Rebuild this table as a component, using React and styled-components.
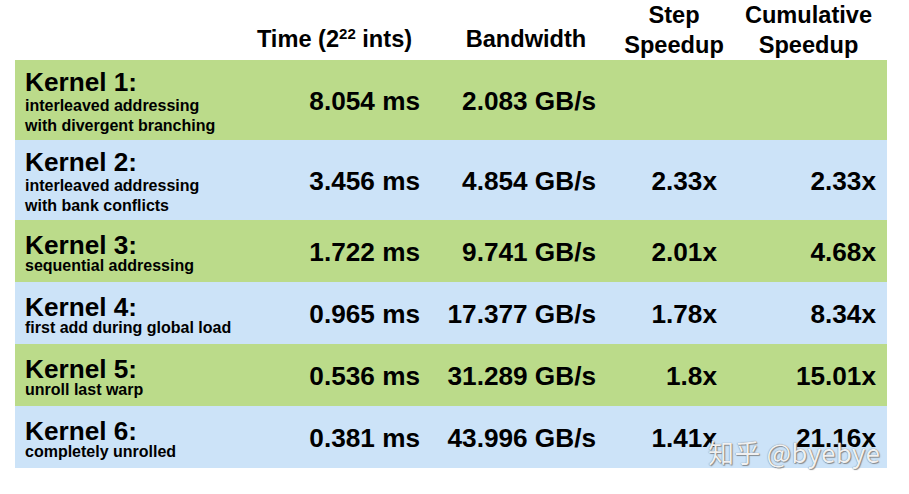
import React from "react";
import styled, { createGlobalStyle } from "styled-components";

const Global = createGlobalStyle`
  html, body { margin: 0; padding: 0; background: #ffffff; }
  body { font-family: "Liberation Sans", Arial, sans-serif; color: #000; }
`;

const Page = styled.div`
  position: relative;
  width: 909px;
  height: 494px;
  padding: 0 22px 0 15px;
  box-sizing: border-box;
  overflow: hidden;
`;

const Table = styled.div`
  display: grid;
  grid-template-columns: 230px 185px 194px 100px 163px;
  width: 872px;
`;

const HeadCell = styled.div`
  height: 60px;
  display: flex;
  flex-direction: column;
  justify-content: flex-end;
  align-items: center;
  text-align: center;
  font-weight: bold;
  font-size: 23.6px;
  line-height: 30px;
  padding-bottom: ${(p) => p.$pb}px;
  box-sizing: border-box;
  transform: translateX(${(p) => p.$dx || 0}px);
  sup {
    font-size: 15px;
    line-height: 0;
    vertical-align: 8px;
  }
`;

const Row = styled.div`
  display: contents;
`;

const Cell = styled.div`
  background: ${(p) => (p.$green ? "#bbdb8a" : "#cce3f8")};
  height: ${(p) => (p.$tall ? 80 : 62)}px;
  box-sizing: border-box;
  display: flex;
  align-items: center;
  justify-content: flex-end;
  padding-right: ${(p) => p.$pr}px;
  font-weight: bold;
  font-size: 26.2px;
  line-height: 26px;
  white-space: nowrap;
  padding-top: 1px;
`;

const LabelCell = styled.div`
  background: ${(p) => (p.$green ? "#bbdb8a" : "#cce3f8")};
  height: ${(p) => (p.$tall ? 80 : 62)}px;
  box-sizing: border-box;
  padding: ${(p) => (p.$tall ? "9px 0 0 10px" : "12px 0 0 10px")};
  display: flex;
  flex-direction: column;
  font-weight: bold;
`;

const KernelName = styled.div`
  font-size: 26.2px;
  line-height: ${(p) => (p.$tall ? 27 : 26)}px;
  white-space: nowrap;
`;

const Sub = styled.div`
  font-size: 16px;
  line-height: ${(p) => (p.$tall ? 20 : 16)}px;
  white-space: nowrap;
`;

const Watermark = styled.div`
  position: absolute;
  left: 708px;
  top: 434px;
  font-family: "Noto Sans CJK SC", "Liberation Sans", sans-serif;
  font-size: 26px;
  line-height: 36px;
  color: rgba(255, 255, 255, 0.92);
  text-shadow: 0 0 1px rgba(90, 90, 90, 0.9), 1px 1px 1px rgba(110, 110, 110, 0.7);
  white-space: nowrap;
  letter-spacing: 0.2px;
`;

const rows = [
  { name: "Kernel 1:", sub: ["interleaved addressing", "with divergent branching"], time: "8.054 ms", bw: "2.083 GB/s", step: "", cum: "", green: true },
  { name: "Kernel 2:", sub: ["interleaved addressing", "with bank conflicts"], time: "3.456 ms", bw: "4.854 GB/s", step: "2.33x", cum: "2.33x", green: false },
  { name: "Kernel 3:", sub: ["sequential addressing"], time: "1.722 ms", bw: "9.741 GB/s", step: "2.01x", cum: "4.68x", green: true },
  { name: "Kernel 4:", sub: ["first add during global load"], time: "0.965 ms", bw: "17.377 GB/s", step: "1.78x", cum: "8.34x", green: false },
  { name: "Kernel 5:", sub: ["unroll last warp"], time: "0.536 ms", bw: "31.289 GB/s", step: "1.8x", cum: "15.01x", green: true },
  { name: "Kernel 6:", sub: ["completely unrolled"], time: "0.381 ms", bw: "43.996 GB/s", step: "1.41x", cum: "21.16x", green: false },
];

export default function App() {
  return (
    <>
      <Global />
      <Page>
        <Table>
          <HeadCell $pb={6} />
          <HeadCell $pb={6} $dx={-3}>
            <span>
              Time (2<sup>22</sup> ints)
            </span>
          </HeadCell>
          <HeadCell $pb={6} $dx={-1}>Bandwidth</HeadCell>
          <HeadCell $pb={0}>
            <span>Step</span>
            <span>Speedup</span>
          </HeadCell>
          <HeadCell $pb={0} $dx={3}>
            <span>Cumulative</span>
            <span>Speedup</span>
          </HeadCell>
          {rows.map((r) => {
            const tall = r.sub.length > 1;
            return (
              <Row key={r.name}>
                <LabelCell $green={r.green} $tall={tall}>
                  <KernelName $tall={tall}>{r.name}</KernelName>
                  {r.sub.map((s) => (
                    <Sub key={s} $tall={tall}>
                      {s}
                    </Sub>
                  ))}
                </LabelCell>
                <Cell $green={r.green} $tall={tall} $pr={10}>{r.time}</Cell>
                <Cell $green={r.green} $tall={tall} $pr={28}>{r.bw}</Cell>
                <Cell $green={r.green} $tall={tall} $pr={7}>{r.step}</Cell>
                <Cell $green={r.green} $tall={tall} $pr={11}>{r.cum}</Cell>
              </Row>
            );
          })}
        </Table>
        <Watermark>知乎 @byebye</Watermark>
      </Page>
    </>
  );
}
